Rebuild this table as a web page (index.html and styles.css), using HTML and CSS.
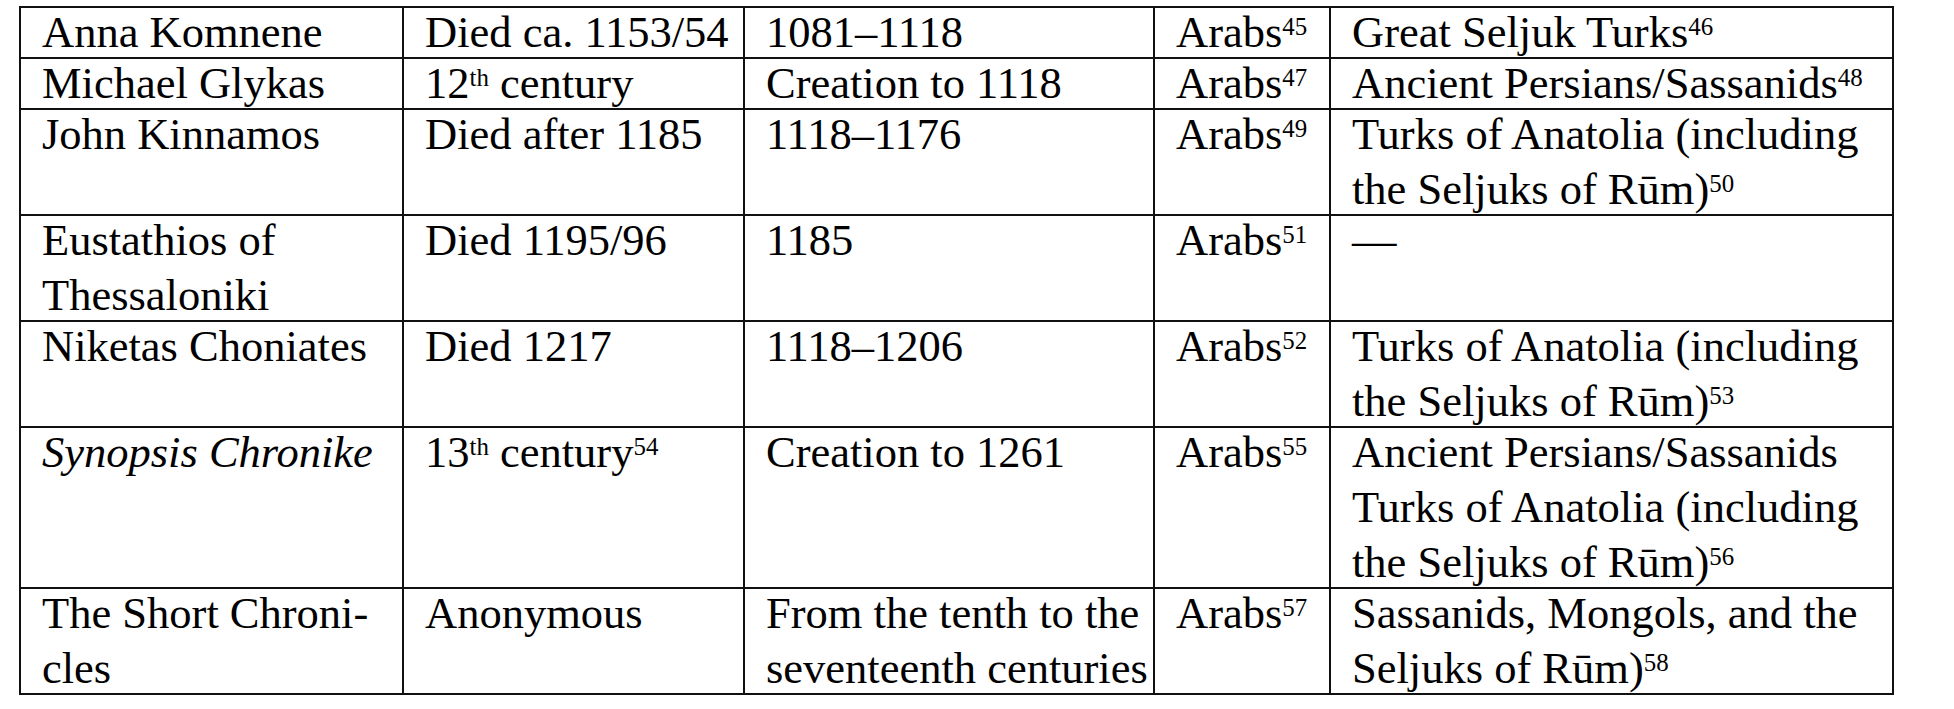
FILE: index.html
```html
<!DOCTYPE html>
<html lang="en">
<head>
<meta charset="utf-8">
<title>Byzantine historians table</title>
<link rel="stylesheet" href="styles.css">
</head>
<body>
<table class="chronicle">
  <colgroup>
    <col class="c-author">
    <col class="c-date">
    <col class="c-period">
    <col class="c-arabs">
    <col class="c-others">
  </colgroup>
  <tbody>
    <tr>
      <td><div class="cell">Anna Komnene</div></td>
      <td><div class="cell">Died ca. 1153/54</div></td>
      <td><div class="cell">1081–1118</div></td>
      <td><div class="cell">Arabs<sup>45</sup></div></td>
      <td><div class="cell">Great Seljuk Turks<sup>46</sup></div></td>
    </tr>
    <tr>
      <td><div class="cell">Michael Glykas</div></td>
      <td><div class="cell">12<sup>th</sup> century</div></td>
      <td><div class="cell">Creation to 1118</div></td>
      <td><div class="cell">Arabs<sup>47</sup></div></td>
      <td><div class="cell">Ancient Persians/Sassanids<sup>48</sup></div></td>
    </tr>
    <tr>
      <td><div class="cell">John Kinnamos</div></td>
      <td><div class="cell">Died after 1185</div></td>
      <td><div class="cell">1118–1176</div></td>
      <td><div class="cell">Arabs<sup>49</sup></div></td>
      <td><div class="cell">Turks of Anatolia (including<br>the Seljuks of Rūm)<sup>50</sup></div></td>
    </tr>
    <tr>
      <td><div class="cell">Eustathios of<br>Thessaloniki</div></td>
      <td><div class="cell">Died 1195/96</div></td>
      <td><div class="cell">1185</div></td>
      <td><div class="cell">Arabs<sup>51</sup></div></td>
      <td><div class="cell">—</div></td>
    </tr>
    <tr>
      <td><div class="cell">Niketas Choniates</div></td>
      <td><div class="cell">Died 1217</div></td>
      <td><div class="cell">1118–1206</div></td>
      <td><div class="cell">Arabs<sup>52</sup></div></td>
      <td><div class="cell">Turks of Anatolia (including<br>the Seljuks of Rūm)<sup>53</sup></div></td>
    </tr>
    <tr>
      <td><div class="cell"><i>Synopsis Chronike</i></div></td>
      <td><div class="cell">13<sup>th</sup> century<sup>54</sup></div></td>
      <td><div class="cell">Creation to 1261</div></td>
      <td><div class="cell">Arabs<sup>55</sup></div></td>
      <td><div class="cell">Ancient Persians/Sassanids<br>Turks of Anatolia (including<br>the Seljuks of Rūm)<sup>56</sup></div></td>
    </tr>
    <tr>
      <td><div class="cell">The Short Chroni-<br>cles</div></td>
      <td><div class="cell">Anonymous</div></td>
      <td><div class="cell">From the tenth to the<br>seventeenth centuries</div></td>
      <td><div class="cell">Arabs<sup>57</sup></div></td>
      <td><div class="cell">Sassanids, Mongols, and the<br>Seljuks of Rūm)<sup>58</sup></div></td>
    </tr>
  </tbody>
</table>
</body>
</html>
```
FILE: styles.css
```css
html, body {
  margin: 0;
  background: #ffffff;
}
body {
  padding: 6px 0 0 19px;
  font-family: "Liberation Serif", "Times New Roman", serif;
  font-size: 44.5px;
  color: #000000;
}
.chronicle {
  border-collapse: collapse;
  table-layout: fixed;
  width: 1875px;
}
.c-author { width: 383px; }
.c-date { width: 341px; }
.c-period { width: 410px; }
.c-arabs { width: 176px; }
.c-others { width: 563px; }
.chronicle td {
  border: 2px solid #111111;
  padding: 0 10px 0 21px;
  vertical-align: top;
  white-space: nowrap;
  overflow: hidden;
}
.cell {
  line-height: 55px;
  margin: -3px 0 -3px 0;
}
sup {
  font-size: 0.56em;
  line-height: 0;
  vertical-align: 12px;
}
```
